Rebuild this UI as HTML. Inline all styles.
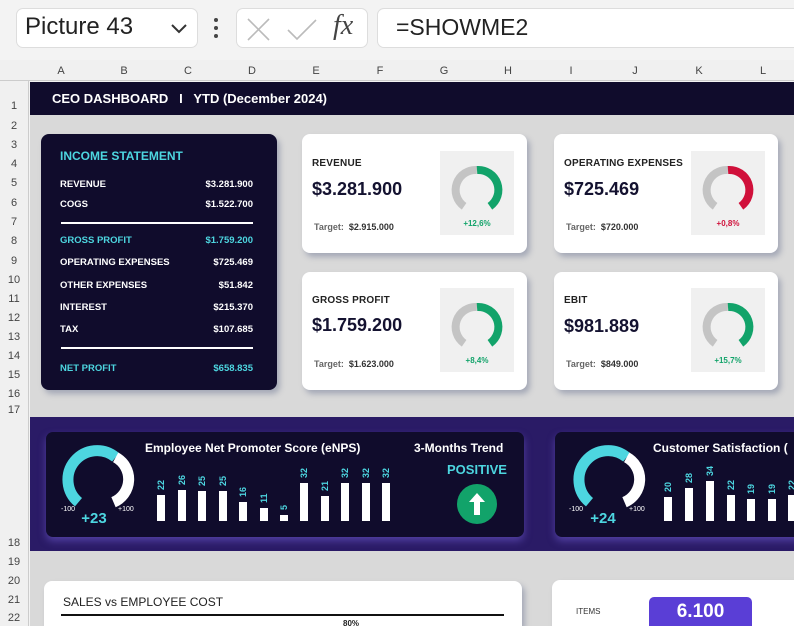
<!DOCTYPE html>
<html style="width:794px;height:626px;overflow:hidden"><head><meta charset="utf-8"><style>
*{margin:0;padding:0;box-sizing:border-box}
body{width:794px;height:626px;overflow:hidden;background:#f3f3f3;font-family:"Liberation Sans",sans-serif;position:relative}
.a{position:absolute}
.rn{position:absolute;left:0;width:28px;text-align:center;font-size:11px;color:#444}
.ch{position:absolute;top:65px;font-size:11px;color:#444;width:20px;text-align:center}
.card{position:absolute;background:#fff;border-radius:8px;box-shadow:3px 4px 6px rgba(70,80,120,.35);overflow:hidden}
.lbl{position:absolute;font-size:10px;font-weight:bold;color:#222;letter-spacing:.2px}
.big{position:absolute;font-size:18px;font-weight:bold;color:#141230}
.tg{position:absolute;font-size:9px;color:#666;font-weight:bold}
.tg b{color:#333}
.gbox{position:absolute;width:74px;height:84px;background:#f0f0f0}
.is{position:absolute;left:19px;right:24px;font-size:9.5px;font-weight:bold;color:#fff;display:flex;justify-content:space-between}
.bar{position:absolute;width:8px;background:#fff}
.bl{position:absolute;font-size:9px;font-weight:bold;color:#4dd6e0;transform:rotate(-90deg);transform-origin:left top;white-space:nowrap}
</style></head><body>
<div class="a" style="left:16px;top:8px;width:182px;height:40px;background:#fff;border:1px solid #ddd;border-radius:7px"></div>
<div class="a" style="left:25px;top:13px;font-size:24px;color:#222">Picture 43</div>
<svg class="a" style="left:170px;top:22px" width="18" height="12"><path d="M2 3 L9 10 L16 3" stroke="#333" stroke-width="2" fill="none"/></svg>
<div class="a" style="left:214px;top:18px;width:4px;height:4px;background:#444;border-radius:2px"></div>
<div class="a" style="left:214px;top:26px;width:4px;height:4px;background:#444;border-radius:2px"></div>
<div class="a" style="left:214px;top:34px;width:4px;height:4px;background:#444;border-radius:2px"></div>
<div class="a" style="left:236px;top:8px;width:132px;height:40px;background:#fff;border:1px solid #ddd;border-radius:7px"></div>
<svg class="a" style="left:245px;top:16px" width="30" height="26"><path d="M3 3 L24 24 M24 3 L3 24" stroke="#bbb" stroke-width="1.6"/></svg>
<svg class="a" style="left:285px;top:16px" width="34" height="26"><path d="M3 14 L12 23 L31 4" stroke="#bbb" stroke-width="1.6" fill="none"/></svg>
<div class="a" style="left:333px;top:10px;font-family:'Liberation Serif',serif;font-style:italic;font-size:28px;color:#444">fx</div>
<div class="a" style="left:377px;top:8px;width:430px;height:40px;background:#fff;border:1px solid #ddd;border-radius:7px"></div>
<div class="a" style="left:396px;top:14px;font-size:23px;color:#222">=SHOWME2</div>
<div class="a" style="left:0;top:60px;width:794px;height:21px;background:#f0f0f0;border-bottom:1px solid #ccc"></div>
<div class="a" style="left:0;top:81px;width:29px;height:545px;background:#f0f0f0;border-right:1px solid #ccc"></div>
<div class="ch" style="left:51px">A</div><div class="ch" style="left:114px">B</div><div class="ch" style="left:178px">C</div><div class="ch" style="left:242px">D</div><div class="ch" style="left:306px">E</div><div class="ch" style="left:370px">F</div><div class="ch" style="left:434px">G</div><div class="ch" style="left:498px">H</div><div class="ch" style="left:561px">I</div><div class="ch" style="left:625px">J</div><div class="ch" style="left:689px">K</div><div class="ch" style="left:753px">L</div>
<div class="rn" style="top:100px">1</div><div class="rn" style="top:120px">2</div><div class="rn" style="top:139px">3</div><div class="rn" style="top:158px">4</div><div class="rn" style="top:177px">5</div><div class="rn" style="top:197px">6</div><div class="rn" style="top:216px">7</div><div class="rn" style="top:235px">8</div><div class="rn" style="top:255px">9</div><div class="rn" style="top:274px">10</div><div class="rn" style="top:293px">11</div><div class="rn" style="top:312px">12</div><div class="rn" style="top:331px">13</div><div class="rn" style="top:350px">14</div><div class="rn" style="top:369px">15</div><div class="rn" style="top:388px">16</div><div class="rn" style="top:404px">17</div><div class="rn" style="top:537px">18</div><div class="rn" style="top:556px">19</div><div class="rn" style="top:575px">20</div><div class="rn" style="top:594px">21</div><div class="rn" style="top:612px">22</div>
<div class="a" style="left:30px;top:82px;width:764px;height:544px;background:#d9d9d9;overflow:hidden">
</div>
<div class="a" style="left:30px;top:82px;width:764px;height:33px;background:#100c2c"></div>
<div class="a" style="left:52px;top:91px;font-size:13px;font-weight:bold;color:#fff">CEO DASHBOARD &nbsp; I &nbsp; YTD (December 2024)</div>
<div class="a" style="left:41px;top:134px;width:236px;height:256px;background:#100c2c;border-radius:8px;box-shadow:3px 4px 6px rgba(70,80,120,.35)">
<div class="a" style="left:19px;top:15px;font-size:12px;font-weight:bold;color:#4dd6e0">INCOME STATEMENT</div>
<div class="is" style="top:45px"><span>REVENUE</span><span>$3.281.900</span></div>
<div class="is" style="top:65px"><span>COGS</span><span>$1.522.700</span></div>
<div class="a" style="left:20px;right:24px;top:88px;height:2px;background:#fff"></div>
<div class="is" style="top:101px;color:#4dd6e0"><span>GROSS PROFIT</span><span>$1.759.200</span></div>
<div class="is" style="top:123px"><span>OPERATING EXPENSES</span><span>$725.469</span></div>
<div class="is" style="top:146px"><span>OTHER EXPENSES</span><span>$51.842</span></div>
<div class="is" style="top:168px"><span>INTEREST</span><span>$215.370</span></div>
<div class="is" style="top:190px"><span>TAX</span><span>$107.685</span></div>
<div class="a" style="left:20px;right:24px;top:213px;height:2px;background:#fff"></div>
<div class="is" style="top:229px;color:#4dd6e0"><span>NET PROFIT</span><span>$658.835</span></div>
</div>
<div class="card" style="left:302px;top:134px;width:225px;height:119px">
<div class="lbl" style="left:10px;top:24px">REVENUE</div><div class="big" style="left:10px;top:45px">$3.281.900</div>
<div class="tg" style="left:12px;top:88px">Target: &nbsp;<b>$2.915.000</b></div>
<div class="gbox" style="left:138px;top:17px"><svg width="74" height="84"><path d="M24.1 55.3 A20 20 0 0 1 37 19" stroke="#c4c4c4" stroke-width="8" fill="none"/><path d="M37 19 A20 20 0 0 1 49.9 55.3" stroke="#12a36a" stroke-width="8" fill="none"/><text x="37" y="75" font-size="8" font-weight="bold" fill="#12a36a" text-anchor="middle" font-family="Liberation Sans">+12,6%</text></svg></div>
</div>
<div class="card" style="left:554px;top:134px;width:224px;height:119px">
<div class="lbl" style="left:10px;top:24px">OPERATING EXPENSES</div><div class="big" style="left:10px;top:45px">$725.469</div>
<div class="tg" style="left:12px;top:88px">Target: &nbsp;<b>$720.000</b></div>
<div class="gbox" style="left:137px;top:17px"><svg width="74" height="84"><path d="M24.1 55.3 A20 20 0 0 1 37 19" stroke="#c4c4c4" stroke-width="8" fill="none"/><path d="M37 19 A20 20 0 0 1 49.9 55.3" stroke="#d0103a" stroke-width="8" fill="none"/><text x="37" y="75" font-size="8" font-weight="bold" fill="#d0103a" text-anchor="middle" font-family="Liberation Sans">+0,8%</text></svg></div>
</div>
<div class="card" style="left:302px;top:272px;width:225px;height:118px">
<div class="lbl" style="left:10px;top:23px">GROSS PROFIT</div><div class="big" style="left:10px;top:43px">$1.759.200</div>
<div class="tg" style="left:12px;top:87px">Target: &nbsp;<b>$1.623.000</b></div>
<div class="gbox" style="left:138px;top:16px"><svg width="74" height="84"><path d="M24.1 55.3 A20 20 0 0 1 37 19" stroke="#c4c4c4" stroke-width="8" fill="none"/><path d="M37 19 A20 20 0 0 1 49.9 55.3" stroke="#12a36a" stroke-width="8" fill="none"/><text x="37" y="75" font-size="8" font-weight="bold" fill="#12a36a" text-anchor="middle" font-family="Liberation Sans">+8,4%</text></svg></div>
</div>
<div class="card" style="left:554px;top:272px;width:224px;height:118px">
<div class="lbl" style="left:10px;top:23px">EBIT</div><div class="big" style="left:10px;top:44px">$981.889</div>
<div class="tg" style="left:12px;top:87px">Target: &nbsp;<b>$849.000</b></div>
<div class="gbox" style="left:137px;top:16px"><svg width="74" height="84"><path d="M24.1 55.3 A20 20 0 0 1 37 19" stroke="#c4c4c4" stroke-width="8" fill="none"/><path d="M37 19 A20 20 0 0 1 49.9 55.3" stroke="#12a36a" stroke-width="8" fill="none"/><text x="37" y="75" font-size="8" font-weight="bold" fill="#12a36a" text-anchor="middle" font-family="Liberation Sans">+15,7%</text></svg></div>
</div>
<div class="a" style="left:30px;top:417px;width:764px;height:134px;background:#2a1b66"></div>
<div class="a" style="left:46px;top:432px;width:478px;height:105px;background:#100c2c;border-radius:7px;box-shadow:0 4px 8px rgba(120,100,220,.5)"></div>
<div class="a" style="left:555px;top:432px;width:260px;height:105px;background:#100c2c;border-radius:7px;box-shadow:0 4px 8px rgba(120,100,220,.5)"></div>
<svg class="a" style="left:46px;top:432px" width="120" height="105">
<path d="M32.5 70.2 A25 25 0 0 1 69.7 25.3" stroke="#4dd6e0" stroke-width="11" fill="none"/>
<path d="M69.7 25.3 A25 25 0 0 1 67.5 70.2" stroke="#fff" stroke-width="11" fill="none"/>
<text x="15" y="79" font-size="7" fill="#fff" font-family="Liberation Sans">-100</text>
<text x="72" y="79" font-size="7" fill="#fff" font-family="Liberation Sans">+100</text>
<text x="48" y="91" font-size="15" font-weight="bold" fill="#4dd6e0" text-anchor="middle" font-family="Liberation Sans">+23</text>
</svg>
<svg class="a" style="left:555px;top:432px" width="120" height="105">
<path d="M34.5 70.2 A25 25 0 0 1 71.7 25.3" stroke="#4dd6e0" stroke-width="11" fill="none"/>
<path d="M71.7 25.3 A25 25 0 0 1 69.5 70.2" stroke="#fff" stroke-width="11" fill="none"/>
<text x="14" y="79" font-size="7" fill="#fff" font-family="Liberation Sans">-100</text>
<text x="74" y="79" font-size="7" fill="#fff" font-family="Liberation Sans">+100</text>
<text x="48" y="91" font-size="15" font-weight="bold" fill="#4dd6e0" text-anchor="middle" font-family="Liberation Sans">+24</text>
</svg>
<div class="a" style="left:145px;top:441px;font-size:12px;font-weight:bold;color:#fff">Employee Net Promoter Score (eNPS)</div>
<div class="a" style="left:414px;top:441px;font-size:12px;font-weight:bold;color:#fff">3-Months Trend</div>
<div class="a" style="left:447px;top:462px;font-size:13px;font-weight:bold;color:#4dd6e0">POSITIVE</div>
<svg class="a" style="left:457px;top:484px" width="40" height="40"><circle cx="20" cy="20" r="20" fill="#12a36a"/><path d="M20 9 L28 18 L23 18 L23 31 L17 31 L17 18 L12 18 Z" fill="#fff"/></svg>
<div class="a" style="left:653px;top:441px;font-size:12px;font-weight:bold;color:#fff;white-space:nowrap">Customer Satisfaction (</div>
<div class="bar" style="left:157px;top:495px;height:26px"></div><div class="bl" style="left:156px;top:490px">22</div>
<div class="bar" style="left:178px;top:490px;height:31px"></div><div class="bl" style="left:177px;top:485px">26</div>
<div class="bar" style="left:198px;top:491px;height:30px"></div><div class="bl" style="left:197px;top:486px">25</div>
<div class="bar" style="left:219px;top:491px;height:30px"></div><div class="bl" style="left:218px;top:486px">25</div>
<div class="bar" style="left:239px;top:502px;height:19px"></div><div class="bl" style="left:238px;top:497px">16</div>
<div class="bar" style="left:260px;top:508px;height:13px"></div><div class="bl" style="left:259px;top:503px">11</div>
<div class="bar" style="left:280px;top:515px;height:6px"></div><div class="bl" style="left:279px;top:510px">5</div>
<div class="bar" style="left:300px;top:483px;height:38px"></div><div class="bl" style="left:299px;top:478px">32</div>
<div class="bar" style="left:321px;top:496px;height:25px"></div><div class="bl" style="left:320px;top:491px">21</div>
<div class="bar" style="left:341px;top:483px;height:38px"></div><div class="bl" style="left:340px;top:478px">32</div>
<div class="bar" style="left:362px;top:483px;height:38px"></div><div class="bl" style="left:361px;top:478px">32</div>
<div class="bar" style="left:382px;top:483px;height:38px"></div><div class="bl" style="left:381px;top:478px">32</div>
<div class="bar" style="left:664px;top:497px;height:24px"></div><div class="bl" style="left:663px;top:492px">20</div>
<div class="bar" style="left:685px;top:488px;height:33px"></div><div class="bl" style="left:684px;top:483px">28</div>
<div class="bar" style="left:706px;top:481px;height:40px"></div><div class="bl" style="left:705px;top:476px">34</div>
<div class="bar" style="left:727px;top:495px;height:26px"></div><div class="bl" style="left:726px;top:490px">22</div>
<div class="bar" style="left:747px;top:499px;height:22px"></div><div class="bl" style="left:746px;top:494px">19</div>
<div class="bar" style="left:768px;top:499px;height:22px"></div><div class="bl" style="left:767px;top:494px">19</div>
<div class="bar" style="left:788px;top:495px;height:26px"></div><div class="bl" style="left:787px;top:490px">22</div>
<div class="card" style="left:44px;top:581px;width:478px;height:45px;border-radius:8px 8px 0 0">
<div class="a" style="left:19px;top:14px;font-size:12px;color:#222">SALES vs EMPLOYEE COST</div>
<div class="a" style="left:17px;top:33px;width:443px;height:2px;background:#111"></div>
<div class="a" style="left:299px;top:38px;font-size:8px;font-weight:bold;color:#222">80%</div>
</div>
<div class="card" style="left:552px;top:580px;width:242px;height:46px;border-radius:8px 0 0 0">
<div class="a" style="left:24px;top:27px;font-size:8px;color:#333">ITEMS</div>
<div class="a" style="left:97px;top:17px;width:103px;height:34px;background:#5a3ed6;border-radius:5px;color:#fff;font-size:19px;font-weight:bold;text-align:center;line-height:30px">6.100</div>
</div>
</body></html>
